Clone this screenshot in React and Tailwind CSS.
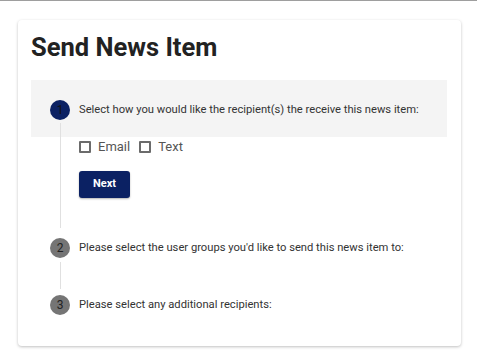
import React from 'react'

function Circle({ n, active }) {
  return (
    <div className={`w-[20px] h-[20px] rounded-full flex items-center justify-center text-[12px] leading-none ${active ? 'bg-[#0b2163] text-[#111]' : 'bg-[#757575] text-[#222]'}`}>
      {n}
    </div>
  )
}

function Check({ label }) {
  return (
    <label className="flex items-center gap-[7px]">
      <span className="w-[12px] h-[12px] border-2 border-[#6b6b6b] rounded-[1px]"></span>
      <span className="text-[13px] text-[#555] leading-4">{label}</span>
    </label>
  )
}

export default function App() {
  return (
    <div className="w-[477px] h-[363px] bg-white border-t border-[#9e9e9e] font-['Roboto',sans-serif]">
      <div className="ml-[18px] mt-[19px] w-[443px] bg-white rounded-[4px] shadow-[0_1px_3px_rgba(0,0,0,0.25)] px-[13px] pt-[11px] pb-[31px]">
        <h1 className="text-[25.5px] leading-8 font-bold text-[#222]">Send News Item</h1>

        <div className="mt-[17px]">
          <div className="h-[57px] bg-[#f4f4f4] w-[416px] flex items-start pl-[19px]">
            <div className="flex flex-col items-center pt-[20px]">
              <Circle n="1" active />
              <div className="w-px h-[14px] mt-[3px] bg-[#e0e0e0]"></div>
            </div>
            <div className="ml-[9px] pt-[20px] h-[40px] flex items-center text-[11.2px] text-[#333]">
              Select how you would like the recipient(s) the receive this news item:
            </div>
          </div>

          <div className="ml-[29px] border-l border-[#e0e0e0] pl-[18px] pt-[2px] pb-[30px]">
            <div className="flex items-center gap-[9px]">
              <Check label="Email" />
              <Check label="Text" />
            </div>
            <button className="mt-[16px] w-[51px] h-[27px] rounded-[3px] bg-[#0b2163] text-white text-[11px] font-bold shadow-[0_1px_2px_rgba(0,0,0,0.3)]">
              Next
            </button>
          </div>

          <div className="mt-[10px] pl-[19px] flex items-center">
            <Circle n="2" />
            <div className="ml-[9px] text-[11.2px] text-[#333]">Please select the user groups you'd like to send this news item to:</div>
          </div>
          <div className="ml-[29px] mt-[4px] w-px h-[27px] bg-[#e0e0e0]"></div>
          <div className="mt-[6px] pl-[19px] flex items-center">
            <Circle n="3" />
            <div className="ml-[9px] text-[11.2px] text-[#333]">Please select any additional recipients:</div>
          </div>
        </div>
      </div>
    </div>
  )
}
